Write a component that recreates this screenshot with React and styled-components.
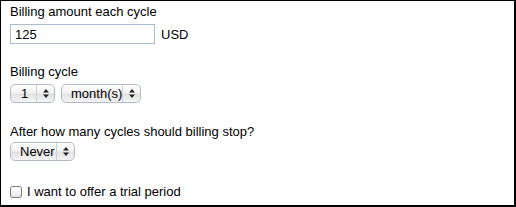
import React from "react";
import styled, { createGlobalStyle } from "styled-components";

const GlobalStyle = createGlobalStyle`
  html, body {
    margin: 0;
    padding: 0;
    background: #ffffff;
  }
  body {
    font-family: "Liberation Sans", Arial, sans-serif;
    color: #000;
  }
`;

const Frame = styled.div`
  width: 516px;
  height: 207px;
  box-sizing: border-box;
  border-style: solid;
  border-color: #000;
  border-width: 1px 2px 2px 1px;
  padding: 3px 9px;
  display: flex;
  flex-direction: column;
`;

const Label = styled.div`
  font-size: 13px;
  line-height: 15px;
  margin-top: ${(p) => p.$top || 0}px;
`;

const Row = styled.div`
  display: flex;
  align-items: center;
  gap: ${(p) => p.$gap || 6}px;
  margin-top: ${(p) => p.$top || 5}px;
`;

const AmountInput = styled.input`
  width: 145px;
  height: 20px;
  box-sizing: border-box;
  border: 1px solid #a9bccf;
  padding: 0 4px;
  font-family: inherit;
  font-size: 13px;
  outline: none;
`;

const Unit = styled.span`
  font-size: 13px;
`;

const SelectBox = styled.div`
  width: ${(p) => p.$w}px;
  height: 19px;
  box-sizing: border-box;
  border: 1px solid #b3bcc6;
  border-radius: 5px;
  background: linear-gradient(#ffffff 0%, #f3f3f3 45%, #e2e2e2 55%, #f4f4f4 100%);
  box-shadow: inset 0 1px 0 #fff;
  display: flex;
  align-items: stretch;
  font-size: 13px;
`;

const SelectText = styled.span`
  flex: 1;
  display: flex;
  align-items: center;
  padding-left: ${(p) => p.$pad || 0}px;
  line-height: 17px;
`;

const ArrowPart = styled.span`
  width: 17px;
  border-left: 1px solid #c9cfd6;
  display: flex;
  align-items: center;
  justify-content: center;
`;

const Arrows = () => (
  <svg width="6" height="9" viewBox="0 0 6 9">
    <path d="M3 0 L6 3.5 L0 3.5 Z" fill="#222" />
    <path d="M0 5.5 L6 5.5 L3 9 Z" fill="#222" />
  </svg>
);

const Select = ({ w, value, pad }) => (
  <SelectBox $w={w}>
    <SelectText $pad={pad}>{value}</SelectText>
    <ArrowPart>
      <Arrows />
    </ArrowPart>
  </SelectBox>
);

const CheckRow = styled.label`
  display: flex;
  align-items: center;
  gap: 5px;
  margin-top: 23px;
  font-size: 13px;
  line-height: 15px;
`;

const Box = styled.span`
  width: 12px;
  height: 12px;
  box-sizing: border-box;
  border: 1px solid #7a7a7a;
  border-radius: 3px;
  background: linear-gradient(#ffffff, #e6e6e6);
`;

export default function App() {
  return (
    <>
      <GlobalStyle />
      <Frame>
        <Label>Billing amount each cycle</Label>
        <Row $top={5}>
          <AmountInput defaultValue="125" />
          <Unit>USD</Unit>
        </Row>
        <Label $top={20}>Billing cycle</Label>
        <Row $top={5}>
          <Select w={45} value="1" pad={10} />
          <Select w={80} value="month(s)" pad={9} />
        </Row>
        <Label $top={21}>After how many cycles should billing stop?</Label>
        <Row $top={3}>
          <Select w={65} value="Never" pad={9} />
        </Row>
        <CheckRow>
          <Box />
          I want to offer a trial period
        </CheckRow>
      </Frame>
    </>
  );
}
